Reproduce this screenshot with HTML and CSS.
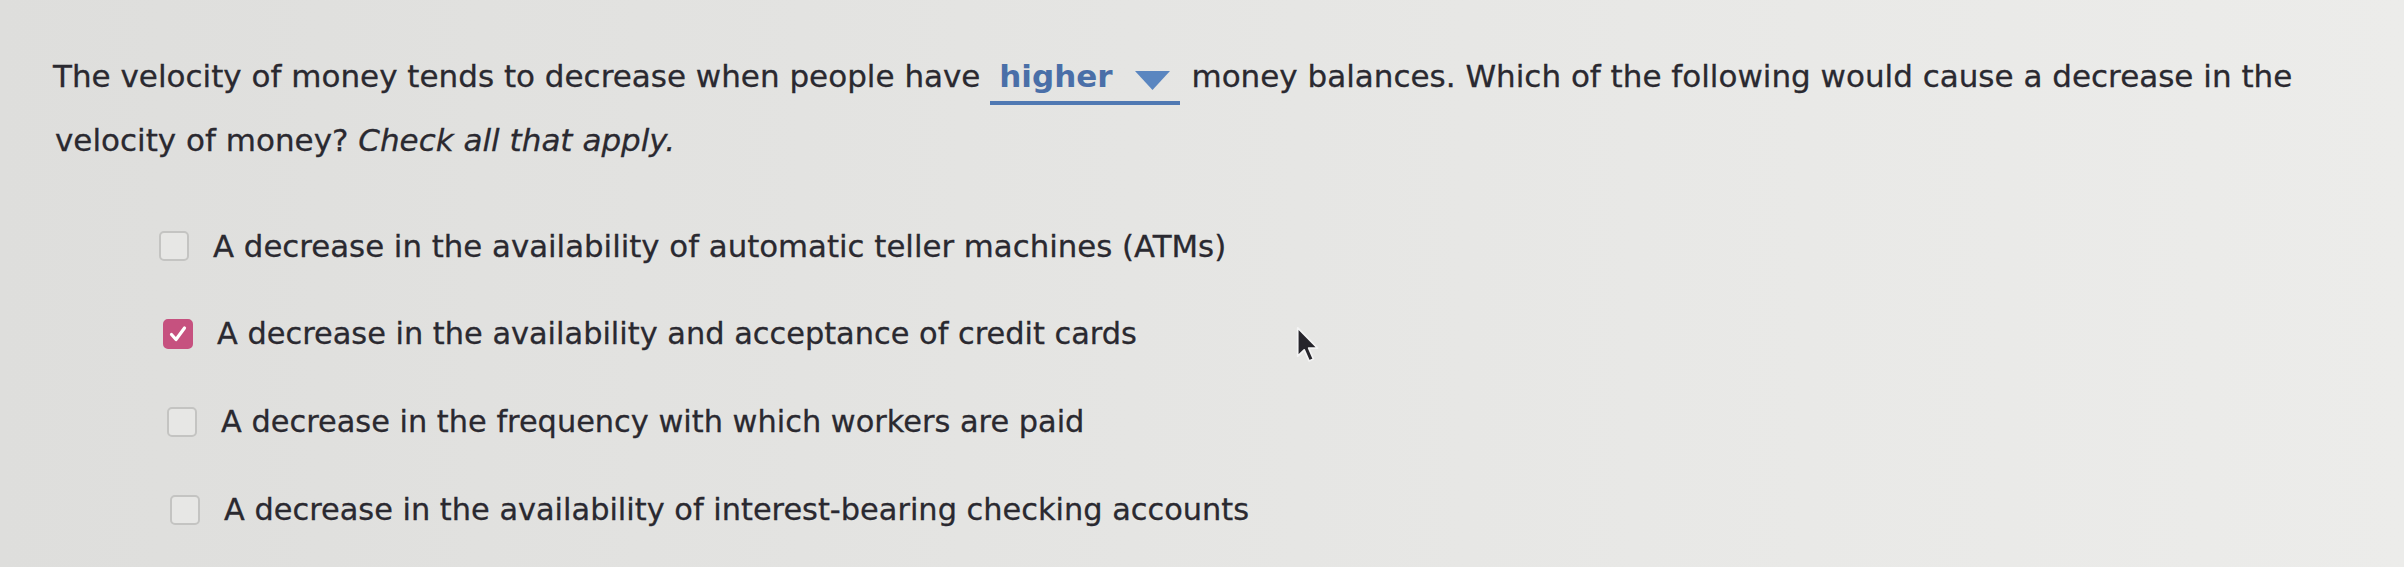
FILE: index.html
```html
<!DOCTYPE html>
<html lang="en">
<head>
<meta charset="utf-8">
<title>Velocity of money</title>
<link rel="stylesheet" href="styles.css">
</head>
<body>
<main class="page">
  <p class="question"><span class="line">The velocity of money tends to decrease when people have <span class="dropdown"><span class="dropdown-value">higher</span><svg class="dropdown-arrow" width="35" height="19" viewBox="0 0 35 19"><polygon points="0,0 35,0 17.5,19" /></svg></span> money balances. Which of the following would cause a decrease in the</span><br><span class="line line-2">velocity of money? <em>Check all that apply.</em></span></p>
  <ul class="options">
    <li class="option option-1"><span class="box"></span><span class="label">A decrease in the availability of automatic teller machines (ATMs)</span></li>
    <li class="option option-2"><span class="box box-checked"><svg width="20" height="18" viewBox="0 0 20 18"><path d="M3.5 9.5 L8 14.5 L16.5 3" /></svg></span><span class="label">A decrease in the availability and acceptance of credit cards</span></li>
    <li class="option option-3"><span class="box"></span><span class="label">A decrease in the frequency with which workers are paid</span></li>
    <li class="option option-4"><span class="box"></span><span class="label">A decrease in the availability of interest-bearing checking accounts</span></li>
  </ul>
  <svg class="cursor" width="24" height="38" viewBox="0 0 14 22"><path d="M1 1 L1 17.5 L4.8 13.8 L7.6 20.3 L10.2 19.2 L7.4 12.8 L12.6 12.8 Z" /></svg>
</main>
</body>
</html>
```
FILE: styles.css
```css
html, body {
  margin: 0;
  height: 100%;
}
body {
  background: linear-gradient(90deg, #dededc 0%, #e4e4e2 40%, #e9e9e7 75%, #ececea 100%);
  font-family: "DejaVu Sans", Verdana, sans-serif;
  color: #2a2930;
  overflow: hidden;
}
.page {
  position: relative;
  height: 567px;
  padding: 44px 0 0 53px;
  box-sizing: border-box;
}
.question {
  margin: 0;
  font-size: 31px;
  line-height: 64px;
  white-space: nowrap;
  -webkit-text-stroke: 0.3px #2a2930;
}
.line-2 {
  padding-left: 2px;
}
.question em {
  font-style: italic;
}
.dropdown {
  display: inline-block;
  line-height: 32px;
  padding: 0 10px 9px 9px;
  margin: 0 2px 0 0;
  border-bottom: 4px solid #5079b3;
}
.dropdown-value {
  font-weight: bold;
  color: #4a6fa8;
  -webkit-text-stroke: 0;
}
.dropdown-arrow {
  margin-left: 22px;
  vertical-align: -3px;
  fill: #5a86c0;
}
.options {
  list-style: none;
  margin: 56px 0 0 106px;
  padding: 0;
  display: flex;
  flex-direction: column;
  gap: 52px;
  font-size: 30.4px;
  line-height: 36px;
  -webkit-text-stroke: 0.3px #2a2930;
}
.option {
  display: flex;
  align-items: center;
  gap: 24px;
  white-space: nowrap;
}
.option-1 .label { font-size: 30.8px; }
.option-2 { padding-left: 4px; }
.option-3 { padding-left: 8px; }
.option-4 { padding-left: 11px; }
.box {
  width: 30px;
  height: 30px;
  box-sizing: border-box;
  border: 2px solid #c4c4c2;
  border-radius: 5px;
  background: #e7e7e5;
  display: flex;
  align-items: center;
  justify-content: center;
  flex: none;
}
.box-checked {
  background: #c6517f;
  border-color: #c6517f;
}
.box-checked path {
  fill: none;
  stroke: #ffffff;
  stroke-width: 3.2;
  stroke-linecap: round;
  stroke-linejoin: round;
}
.cursor {
  position: absolute;
  left: 1296px;
  top: 326px;
}
.cursor path {
  fill: #26252b;
  stroke: #f4f4f4;
  stroke-width: 1;
  stroke-linejoin: round;
}
```
